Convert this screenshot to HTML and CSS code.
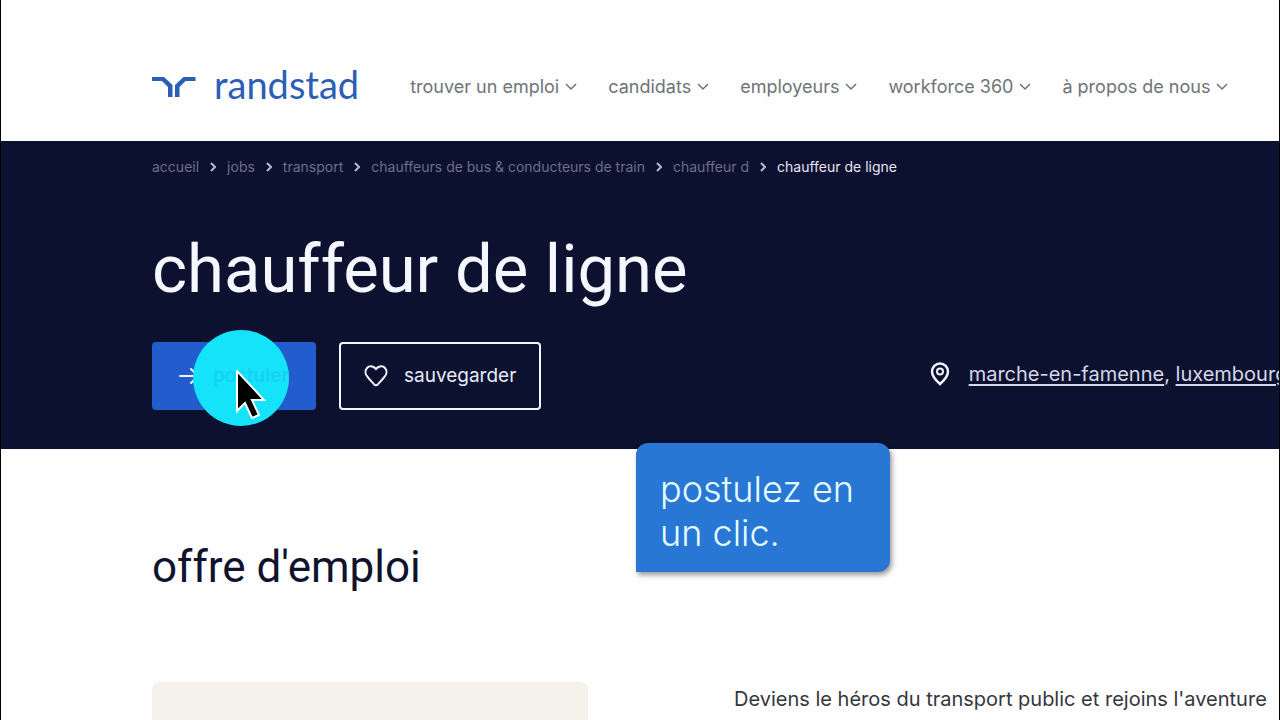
FILE: index.html
```html
<!DOCTYPE html>
<html lang="fr">

<head>
    <meta charset="utf-8">
    <meta name="viewport" content="width=device-width, initial-scale=1.0">
    <title>chauffeur de ligne | randstad</title>
    <link rel="stylesheet" href="styles.css">
</head>

<body>
    <header class="header">
        <a class="logo" href="#">
            <svg width="44" height="22" viewBox="0 0 44 22" fill="currentColor" aria-hidden="true">
                <path d="M0 1h12l8.500 8v12H16V11l-6-6H0z" />
                <path d="M43.500 1h-12L23 9v12h4.500V11l6-6h10z" />
            </svg>
            <span>randstad</span>
        </a>
        <nav class="nav">
            <a href="#">trouver un emploi <svg class="chevron" viewBox="0 0 12 8"><path d="M1 1l5 5 5-5" /></svg></a>
            <a href="#">candidats <svg class="chevron" viewBox="0 0 12 8"><path d="M1 1l5 5 5-5" /></svg></a>
            <a href="#">employeurs <svg class="chevron" viewBox="0 0 12 8"><path d="M1 1l5 5 5-5" /></svg></a>
            <a href="#">workforce 360 <svg class="chevron" viewBox="0 0 12 8"><path d="M1 1l5 5 5-5" /></svg></a>
            <a href="#">à propos de nous <svg class="chevron" viewBox="0 0 12 8"><path d="M1 1l5 5 5-5" /></svg></a>
        </nav>
    </header>

    <section class="hero">
        <nav class="breadcrumb">
            <a href="#">accueil</a>
            <svg viewBox="0 0 6 10"><path d="M1 1l4 4-4 4" /></svg>
            <a href="#">jobs</a>
            <svg viewBox="0 0 6 10"><path d="M1 1l4 4-4 4" /></svg>
            <a href="#">transport</a>
            <svg viewBox="0 0 6 10"><path d="M1 1l4 4-4 4" /></svg>
            <a href="#">chauffeurs de bus &amp; conducteurs de train</a>
            <svg viewBox="0 0 6 10"><path d="M1 1l4 4-4 4" /></svg>
            <a href="#">chauffeur d</a>
            <svg viewBox="0 0 6 10"><path d="M1 1l4 4-4 4" /></svg>
            <span class="current">chauffeur de ligne</span>
        </nav>

        <h1>chauffeur de ligne</h1>

        <div class="hero-row">
            <div class="actions">
                <button class="btn btn-apply">
                    <svg width="20" height="18" viewBox="0 0 20 18"><path d="M1 9h18M12 2l7 7-7 7" /></svg>
                    <span class="halo"></span>
                    <span class="label">postuler</span>
                    <svg class="cursor" viewBox="0 0 32 52">
                        <path d="M2 1v40l8-8 7 15 7-3-7-15h12z" />
                    </svg>
                </button>
                <button class="btn btn-save">
                    <svg width="24" height="22" viewBox="0 0 24 22"><path d="M12 4C9 .5 5 .7 3 3c-2.200 2.600-1.800 6.200.4 8.600C5.500 14.500 8 17 10 19.200q2 2 4 0c2-2.200 4.500-4.700 6.600-7.600C22.800 9.200 23.200 5.600 21 3c-2-2.300-6-2.500-9 1z" /></svg>
                    sauvegarder
                </button>
            </div>
            <p class="location">
                <svg width="20" height="24" viewBox="0 0 20 24">
                    <path d="M10 22C6 18.500 2 14.500 2 9.500a8 8 0 0 1 16 0c0 5-4 9-8 12.500z" />
                    <circle cx="10" cy="9.500" r="3" />
                </svg>
                <span><a href="#">marche-en-famenne</a>, <a href="#">luxembourg</a></span>
            </p>
        </div>

        <aside class="callout">postulez en<br>un clic.</aside>
    </section>

    <main class="offer">
        <h2>offre d'emploi</h2>
        <div class="offer-grid">
            <div class="summary"></div>
            <p class="description">Deviens le héros du transport public et rejoins l'aventure</p>
        </div>
    </main>
</body>

</html>
```

FILE: styles.css
```css
* {
    box-sizing: border-box;
}

html {
    background-color: #fefefe;
}

body {
    margin: 0;
    min-height: 100vh;
    border-left: 1px solid black;
    border-right: 1px solid black;
    font-family: Inter, "Liberation Sans", sans-serif;
    overflow: hidden;
}

a {
    color: inherit;
    text-decoration: none;
}

svg {
    flex: none;
}

/* HEADER */

.header {
    display: flex;
    align-items: center;
    gap: 51px;
    height: 141px;
    padding: 32px 0 0 151px;
    white-space: nowrap;
}

.logo {
    display: flex;
    align-items: center;
    gap: 18px;
    color: #2b5fb5;
    font-family: Lato, sans-serif;
    font-size: 38px;
    line-height: 48px;
}

.logo span {
    padding-bottom: 6px;
}

.nav {
    display: flex;
    gap: 31px;
    color: #707378;
    font-size: 18px;
    line-height: 24px;
}

.nav a {
    display: flex;
    align-items: center;
    gap: 6px;
}

.chevron {
    width: 12px;
    height: 8px;
    fill: none;
    stroke: currentColor;
    stroke-width: 1.5;
}

/* HERO */

.hero {
    position: relative;
    height: 308px;
    padding: 16px 0 0 151px;
    background-color: #0d1130;
    color: #f5f7ff;
}

.breadcrumb {
    display: flex;
    align-items: center;
    gap: 11px;
    color: #6c6f88;
    font-size: 14px;
    line-height: 20px;
    white-space: nowrap;
}

.breadcrumb svg {
    width: 6px;
    height: 10px;
    fill: none;
    stroke: #b4b7cc;
    stroke-width: 2;
}

.current {
    color: #e4e6f2;
}

h1,
h2 {
    font-family: Roboto, "Liberation Sans", sans-serif;
    font-weight: 400;
}

h1 {
    margin: 50px 0 31px;
    font-size: 67px;
    line-height: 84px;
}

.hero-row {
    display: grid;
    grid-template-columns: minmax(0, 69fr) minmax(0, 31fr);
    align-items: center;
}

.actions {
    display: flex;
    gap: 23px;
}

.btn {
    display: flex;
    align-items: center;
    height: 68px;
    padding: 0 27px;
    border: 0;
    border-radius: 4px;
    background-color: transparent;
    color: #e8ebf7;
    font: 19px/24px Inter, "Liberation Sans", sans-serif;
}

.btn svg {
    fill: none;
    stroke: #f0f2fc;
    stroke-width: 2;
    stroke-linecap: round;
}

.btn-apply {
    position: relative;
    gap: 14px;
    background-color: #235dcd;
}

.btn-save {
    gap: 16px;
    padding: 0 23px;
    border: 2px solid #f5f7ff;
}

.halo {
    position: absolute;
    top: -12px;
    left: 41px;
    width: 96px;
    height: 96px;
    border-radius: 50%;
    background-color: #14e3f9;
}

.label {
    position: relative;
    color: #17d0f7;
    font-weight: 600;
}

.btn .cursor {
    position: absolute;
    top: 28px;
    left: 83px;
    width: 32px;
    height: 52px;
    fill: black;
    stroke: white;
}

.location {
    display: flex;
    align-items: center;
    gap: 19px;
    margin: 0;
    padding-bottom: 4px;
    font-size: 20px;
    line-height: 24px;
    white-space: nowrap;
    color: #d5d8e8;
}

.location svg {
    fill: none;
    stroke: #f0f2fc;
    stroke-width: 2.5;
}

.location circle {
    stroke-width: 2;
}

.location a {
    text-decoration: underline;
    text-underline-offset: 3px;
}

.callout {
    position: absolute;
    top: 302px;
    left: 635px;
    padding: 24px 36px 17px 24px;
    border-radius: 12px 12px 12px 0;
    background-color: #2877d4;
    box-shadow: 2px 3px 5px rgba(0, 0, 0, 0.4);
    color: #e6fdff;
    font-size: 36px;
    font-weight: 300;
    line-height: 44px;
    white-space: nowrap;
}

/* OFFER */

.offer {
    padding: 90px 0 0 151px;
}

h2 {
    margin: 0;
    color: #10132e;
    font-size: 44px;
    line-height: 56px;
}

.offer-grid {
    display: grid;
    grid-template-columns: 436px minmax(0, 1fr);
    gap: 146px;
    margin-top: 87px;
}

.summary {
    min-height: 240px;
    border-radius: 8px;
    background-color: #f3f1ea;
}

.description {
    margin: 5px 0 0;
    color: #35373d;
    font-size: 20px;
    line-height: 24px;
    white-space: nowrap;
}
```
